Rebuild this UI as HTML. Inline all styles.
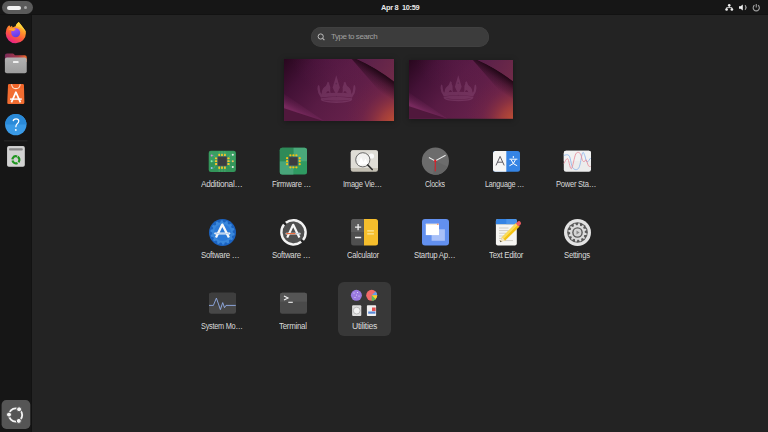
<!DOCTYPE html>
<html><head><meta charset="utf-8">
<style>
*{margin:0;padding:0;box-sizing:border-box}
html,body{width:768px;height:432px;overflow:hidden;background:#232323;font-family:"Liberation Sans",sans-serif}
.abs{position:absolute}
#top{left:0;top:0;width:768px;height:15px;background:#161616;border-bottom:1px solid #121212}
#dock{left:0;top:15px;width:32px;height:417px;background:#161616;border-right:1px solid #121212}
#pill{left:1.5px;top:1.2px;width:31.5px;height:13px;border-radius:6.5px;background:#5a5a5a}
#pill i{position:absolute;left:5.5px;top:4.4px;width:14px;height:4.3px;border-radius:2.15px;background:#f2f2f2}
#pill b{position:absolute;left:22.3px;top:4.9px;width:3px;height:3px;border-radius:50%;background:#a8a8a8}
#clock{left:381px;top:2.9px;font-size:7.4px;font-weight:bold;color:#e8e8e8;white-space:pre;letter-spacing:-0.3px}
#search{left:310.7px;top:26.7px;width:178.4px;height:20.4px;border-radius:10.2px;background:#3c3c3c;box-shadow:inset 0 0 0 0.6px #444}
#search span{position:absolute;left:20.2px;top:5.6px;font-size:8px;color:#a0a0a0;letter-spacing:-0.44px}
.thumb{box-shadow:0 1px 6px rgba(0,0,0,.35)}
.lbl{position:absolute;font-size:8.5px;line-height:10px;color:#dadada;white-space:nowrap;letter-spacing:-0.3px;transform-origin:0 0}
.ic{position:absolute;width:28px;height:28px}
</style></head><body>
<div id="top" class="abs"></div>
<div id="dock" class="abs"></div>
<div id="pill" class="abs"><i></i><b></b></div>
<div id="clock" class="abs">Apr 8  10:59</div>

<!-- top right icons -->
<svg class="abs" style="left:720px;top:0" width="48" height="15" viewBox="0 0 48 15">
 <g fill="#f0f0f0" stroke="#f0f0f0">
  <circle cx="9.25" cy="5.2" r="1.3" stroke="none"/>
  <circle cx="6.6" cy="9.5" r="1.35" stroke="none"/>
  <circle cx="11.9" cy="9.5" r="1.35" stroke="none"/>
  <path d="M9.25 5.5V7.6M6.6 9.3V7.6H11.9V9.3" fill="none" stroke-width="0.8"/>
 </g>
 <path d="M19 6.2H20.6L22.8 4.6V10.4L20.6 8.8H19Z" fill="#f0f0f0"/>
 <path d="M25.3 5.2Q27.3 7.5 25.3 9.8Q26 7.5 25.3 5.2Z" fill="#9a9a9a" stroke="#9a9a9a" stroke-width=".9" stroke-linejoin="round"/>
 <path d="M34.47 5.26A3.1 3.1 0 1 0 38.03 5.26" fill="none" stroke="#a6a6a6" stroke-width="1.05"/>
 <path d="M36.25 4.1V7.4" stroke="#a6a6a6" stroke-width="1.05"/>
</svg>

<!-- search -->
<div id="search" class="abs">
 <svg class="abs" style="left:6px;top:6.8px" width="9" height="9" viewBox="0 0 9 9"><circle cx="3.7" cy="3.5" r="2.6" fill="none" stroke="#bdbdbd" stroke-width="1"/><path d="M5.6 5.4L7.4 7.2" stroke="#bdbdbd" stroke-width="1.1"/></svg>
 <span>Type to search</span>
</div>

<!-- wallpaper def -->
<svg width="0" height="0" style="position:absolute">
 <defs>
  <linearGradient id="wg" gradientUnits="userSpaceOnUse" x1="0" y1="0" x2="110" y2="90">
   <stop offset="0" stop-color="#28071e"/>
   <stop offset="0.25" stop-color="#431136"/>
   <stop offset="0.55" stop-color="#581b44"/>
   <stop offset="1" stop-color="#68224c"/>
  </linearGradient>
  <radialGradient id="wr" cx="168" cy="98" r="82" gradientUnits="userSpaceOnUse">
   <stop offset="0" stop-color="#d05a2c"/>
   <stop offset="0.35" stop-color="#a8403a" stop-opacity="0.85"/>
   <stop offset="0.7" stop-color="#7a2842" stop-opacity="0.35"/>
   <stop offset="1" stop-color="#6a2040" stop-opacity="0"/>
  </radialGradient>
  <radialGradient id="wtop" cx="70" cy="-10" r="60" gradientUnits="userSpaceOnUse">
   <stop offset="0" stop-color="#6a2254" stop-opacity="0.3"/>
   <stop offset="1" stop-color="#6a2254" stop-opacity="0"/>
  </radialGradient>
  <linearGradient id="wsh" gradientUnits="userSpaceOnUse" x1="136" y1="15" x2="122" y2="36">
   <stop offset="0" stop-color="#14030c" stop-opacity="0.9"/>
   <stop offset="0.5" stop-color="#14030c" stop-opacity="0.35"/>
   <stop offset="1" stop-color="#14030c" stop-opacity="0"/>
  </linearGradient>
  <linearGradient id="wfold" gradientUnits="userSpaceOnUse" x1="110" y1="0" x2="160" y2="32">
   <stop offset="0" stop-color="#58204a"/>
   <stop offset="1" stop-color="#702a48"/>
  </linearGradient>
  <linearGradient id="wwedge" gradientUnits="userSpaceOnUse" x1="14" y1="54" x2="6" y2="70">
   <stop offset="0" stop-color="#5c1c48" stop-opacity="0"/>
   <stop offset="1" stop-color="#76295c"/>
  </linearGradient>
 </defs>
</svg>
<svg class="abs thumb" style="left:283.6px;top:58.5px" width="110.5" height="62.5" viewBox="0 0 160 90" preserveAspectRatio="none"><g>
   <rect width="160" height="90" fill="url(#wg)"/>
   <rect width="160" height="90" fill="url(#wtop)"/>
   <rect width="160" height="90" fill="url(#wr)"/>
   <path d="M105 0Q133 12 160 32V72Q128 34 98 0Z" fill="url(#wsh)"/>
   <path d="M106 0Q134 13 160 33V0Z" fill="url(#wfold)"/>
   <path d="M0 50L59 90H0Z" fill="url(#wwedge)"/>
   <path d="M0 71L59 90H0Z" fill="#4c1639" opacity=".9"/>
   <g fill="#a0608e" opacity="0.3">
    <path d="M75.7 23.5L80.8 41Q79 46.5 75.7 51.2Q72.4 46.5 70.5 41Z"/>
    <path d="M49.4 37.5Q46.3 47 53.4 55.5L56 54.5Q51.2 47 51.3 38.6Z"/>
    <path d="M102.6 37.5Q105.7 47 98.6 55.5L96 54.5Q100.8 47 100.7 38.6Z"/>
    <path d="M54.8 51.5Q54 44 58.5 40.5Q61.5 38.5 62.3 35.2L63.2 32.6L65.4 33.8L65.6 36.5Q67.6 40 67 44Q66.8 46.5 67.5 49H66Q65.5 47 64 46Q61.5 46.5 61 49.5Z"/>
    <path d="M97.2 51.5Q98 44 93.5 40.5Q90.5 38.5 89.7 35.2L88.8 32.6L86.6 33.8L86.4 36.5Q84.4 40 85 44Q85.2 46.5 84.5 49H86Q86.5 47 88 46Q90.5 46.5 91 49.5Z"/>
    <path d="M54 49.5Q76 47.5 98 49.5L98.6 55.5Q76 52.5 53.4 55.5Z"/>
    <path d="M53.4 56.5Q76 52 98.6 56.5Q101 62.8 76 63.2Q51 62.8 53.4 56.5ZM56 58.6Q76 61.5 96 58.6Q94 60.5 76 61Q58 60.5 56 58.6Z" fill-rule="evenodd"/>
   </g>
   <g fill="#3a0e30" opacity=".3">
    <circle cx="75.7" cy="35.5" r="1.2"/>
    <circle cx="75.7" cy="53.8" r=".7"/>
   </g>
  </g>
</svg>
<svg class="abs thumb" style="left:409px;top:60.2px" width="104.2" height="58.7" viewBox="0 0 160 90" preserveAspectRatio="none"><g>
   <rect width="160" height="90" fill="url(#wg)"/>
   <rect width="160" height="90" fill="url(#wtop)"/>
   <rect width="160" height="90" fill="url(#wr)"/>
   <path d="M105 0Q133 12 160 32V72Q128 34 98 0Z" fill="url(#wsh)"/>
   <path d="M106 0Q134 13 160 33V0Z" fill="url(#wfold)"/>
   <path d="M0 50L59 90H0Z" fill="url(#wwedge)"/>
   <path d="M0 71L59 90H0Z" fill="#4c1639" opacity=".9"/>
   <g fill="#a0608e" opacity="0.3">
    <path d="M75.7 23.5L80.8 41Q79 46.5 75.7 51.2Q72.4 46.5 70.5 41Z"/>
    <path d="M49.4 37.5Q46.3 47 53.4 55.5L56 54.5Q51.2 47 51.3 38.6Z"/>
    <path d="M102.6 37.5Q105.7 47 98.6 55.5L96 54.5Q100.8 47 100.7 38.6Z"/>
    <path d="M54.8 51.5Q54 44 58.5 40.5Q61.5 38.5 62.3 35.2L63.2 32.6L65.4 33.8L65.6 36.5Q67.6 40 67 44Q66.8 46.5 67.5 49H66Q65.5 47 64 46Q61.5 46.5 61 49.5Z"/>
    <path d="M97.2 51.5Q98 44 93.5 40.5Q90.5 38.5 89.7 35.2L88.8 32.6L86.6 33.8L86.4 36.5Q84.4 40 85 44Q85.2 46.5 84.5 49H86Q86.5 47 88 46Q90.5 46.5 91 49.5Z"/>
    <path d="M54 49.5Q76 47.5 98 49.5L98.6 55.5Q76 52.5 53.4 55.5Z"/>
    <path d="M53.4 56.5Q76 52 98.6 56.5Q101 62.8 76 63.2Q51 62.8 53.4 56.5ZM56 58.6Q76 61.5 96 58.6Q94 60.5 76 61Q58 60.5 56 58.6Z" fill-rule="evenodd"/>
   </g>
   <g fill="#3a0e30" opacity=".3">
    <circle cx="75.7" cy="35.5" r="1.2"/>
    <circle cx="75.7" cy="53.8" r=".7"/>
   </g>
  </g>
</svg>

<!-- dock icons -->
<svg class="abs" style="left:0;top:15px" width="31" height="417" viewBox="0 15 31 417">
 <defs>
  <linearGradient id="ffg" x1="0.85" y1="0.05" x2="0.35" y2="1">
   <stop offset="0" stop-color="#ffe24a"/>
   <stop offset="0.35" stop-color="#ff9a2a"/>
   <stop offset="0.65" stop-color="#ff5a3a"/>
   <stop offset="1" stop-color="#e8208a"/>
  </linearGradient>
  <linearGradient id="fdb" x1="0" y1="0" x2="1" y2="0">
   <stop offset="0" stop-color="#7a2a58"/>
   <stop offset="0.6" stop-color="#a83a48"/>
   <stop offset="1" stop-color="#f06a28"/>
  </linearGradient>
  <linearGradient id="fdg" x1="0" y1="0" x2="0" y2="1">
   <stop offset="0" stop-color="#b2b2b2"/>
   <stop offset="1" stop-color="#9c9c9c"/>
  </linearGradient>
  <linearGradient id="ffp" x1="0.3" y1="0" x2="0.6" y2="1">
   <stop offset="0" stop-color="#a050ff"/>
   <stop offset="1" stop-color="#5a3ee0"/>
  </linearGradient>
 </defs>
 <!-- firefox -->
 <path d="M18.7 21.9Q20.8 24.3 23.4 28.1Q26 31 25.9 33.2A10.1 10.1 0 0 1 5.7 33.3Q5.7 29 7.8 26.6L9.3 25.2L10.4 27.1L11.9 25.7L12.7 27.6Q14 26.6 15.6 26.3Q16.2 23.6 18.7 21.9Z" fill="url(#ffg)"/>
 <path d="M18.7 21.9Q20.8 24.3 23.4 28.1Q26 31 25.9 33.2Q24.5 29 20.5 27.5Q18 26.2 15.6 26.3Q16.2 23.6 18.7 21.9Z" fill="#ffd23a"/>
 <circle cx="15.7" cy="32.8" r="4.5" fill="url(#ffp)"/>
 <path d="M8.2 29.4Q10.5 27.8 13.2 28.3Q14.8 28.6 15.9 30Q14 30.4 13.2 31.2Q11 30.2 8.2 29.4Z" fill="#ffa02e"/>
 <!-- files -->
 <path d="M4.9 55.6Q4.9 53.5 7 53.5H12.6Q13.6 53.5 14.3 54.4L14.9 55.2H24.7Q26.75 55.2 26.75 57.2V62H4.9Z" fill="url(#fdb)"/>
 <rect x="4.9" y="57.5" width="21.85" height="15.8" rx="2" fill="url(#fdg)"/>
 <rect x="13" y="61.1" width="5.6" height="2" rx=".6" fill="#f0f0f0"/>
 <!-- app center -->
 <path d="M9.2 83.9H22.8Q23.9 83.9 23.95 85L24.4 102.6Q24.4 103.9 23.1 103.9H8.7Q7.4 103.9 7.4 102.6L8 85Q8.1 83.9 9.2 83.9Z" fill="#f0662a"/>
 <path d="M8 88Q16 89.5 24 88V103.9H7.4Z" fill="#f47438" opacity=".5"/>
 <path d="M11.6 84.2Q12 88.6 15.9 88.6Q19.8 88.6 20.2 84.2" fill="none" stroke="#fde0cc" stroke-width="1.1"/>
 <path d="M11.4 102.4L15.9 92.2L20.4 102.4" fill="none" stroke="#fff" stroke-width="1.7" stroke-linejoin="round"/>
 <path d="M10 99.1H21.8" stroke="#fff" stroke-width="1.4"/>
 <!-- help -->
 <circle cx="15.8" cy="124.6" r="10.7" fill="#3a9ae6"/>
 <path d="M5.1 124.6A10.7 10.7 0 0 1 26.5 124.6Z" fill="#2a8ad8"/>
 <path d="M13.2 121.1Q13.4 118.8 16.1 118.8Q18.8 118.8 18.8 121.1Q18.8 122.7 17 124.1Q15.9 125 15.8 127.2" fill="none" stroke="#fff" stroke-width="1.25"/>
 <circle cx="15.8" cy="129.9" r="0.95" fill="#fff"/>
 <!-- separator -->
 <rect x="4.1" y="140.4" width="23.3" height="0.9" fill="#2e2e2e"/>
 <!-- trash -->
 <rect x="7.05" y="146.1" width="17.75" height="20.7" rx="1.8" fill="#c4c4c4"/>
 <rect x="7.5" y="146.5" width="16.85" height="19.8" rx="1.5" fill="#d2d2d2"/>
 <rect x="9" y="148.2" width="13.8" height="2.2" rx="1" fill="#888"/>
 <circle cx="15.9" cy="159.8" r="3.5" fill="none" stroke="#1f951f" stroke-width="2.2" stroke-dasharray="6.2 1.13" transform="rotate(-60 15.9 159.8)"/>
 <!-- show apps -->
 <rect x="1.6" y="400" width="28.7" height="29" rx="4.7" fill="#555"/>
 <circle cx="15.6" cy="415" r="6.6" fill="none" stroke="#f2f2f2" stroke-width="1.9"/>
 <circle cx="9" cy="414.6" r="2.5" fill="#f4f4f4" stroke="#555" stroke-width="1"/>
 <circle cx="19.1" cy="409.3" r="2.5" fill="#f4f4f4" stroke="#555" stroke-width="1"/>
 <circle cx="18.8" cy="420.9" r="2.5" fill="#f4f4f4" stroke="#555" stroke-width="1"/>
</svg>

<!-- app grid: labels -->
<div class="abs" style="left:337.6px;top:282.1px;width:53.7px;height:53.7px;border-radius:6px;background:#383838"></div>
<div class="lbl" style="left:200.9px;top:178.5px;transform:scaleX(0.974)">Additional…</div>
<div class="lbl" style="left:271.9px;top:178.5px;transform:scaleX(0.897)">Firmware …</div>
<div class="lbl" style="left:343.2px;top:178.5px;transform:scaleX(0.891)">Image Vie…</div>
<div class="lbl" style="left:425.1px;top:178.5px;transform:scaleX(0.833)">Clocks</div>
<div class="lbl" style="left:485.0px;top:178.5px;transform:scaleX(0.853)">Language …</div>
<div class="lbl" style="left:556.1px;top:178.5px;transform:scaleX(0.895)">Power Sta…</div>
<div class="lbl" style="left:200.7px;top:249.5px;transform:scaleX(0.927)">Software …</div>
<div class="lbl" style="left:271.8px;top:249.5px;transform:scaleX(0.927)">Software …</div>
<div class="lbl" style="left:347.4px;top:249.5px;transform:scaleX(0.903)">Calculator</div>
<div class="lbl" style="left:413.8px;top:249.5px;transform:scaleX(0.920)">Startup Ap…</div>
<div class="lbl" style="left:488.9px;top:249.5px;transform:scaleX(0.924)">Text Editor</div>
<div class="lbl" style="left:564.1px;top:249.5px;transform:scaleX(0.910)">Settings</div>
<div class="lbl" style="left:200.7px;top:320.5px;transform:scaleX(0.865)">System Mo…</div>
<div class="lbl" style="left:279.1px;top:320.5px;transform:scaleX(0.930)">Terminal</div>
<div class="lbl" style="left:351.6px;top:320.5px;transform:scaleX(1.016)">Utilities</div>

<!-- app grid icons -->
<svg class="abs" style="left:0;top:0" width="768" height="432">
 <!-- Additional drivers -->
 <rect x="208.7" y="150.8" width="27.2" height="21.2" rx="2.2" fill="#33955a"/>
 <rect x="209.2" y="151.3" width="26.2" height="10" rx="1.8" fill="#3a9e62"/>
 <g stroke="#6cc090" stroke-width=".45" fill="none" opacity=".8">
  <path d="M219.2 151V172M222 151V172M224.9 151V172"/>
  <path d="M212.3 155.5H214L216 158.4M212.2 161.2H216M212.3 168.1H214L216 164M232.2 154.8H230.5L228.3 158.4M232.2 161.2H228.3M232.2 167H230.5L228.3 164"/>
 </g>
 <g fill="#f6c42a">
  <rect x="218.3" y="153.7" width="1.8" height="2.6" rx=".7"/><rect x="221.1" y="153.7" width="1.8" height="2.6" rx=".7"/><rect x="224" y="153.7" width="1.8" height="2.6" rx=".7"/>
  <rect x="218.3" y="166.3" width="1.8" height="2.6" rx=".7"/><rect x="221.1" y="166.3" width="1.8" height="2.6" rx=".7"/><rect x="224" y="166.3" width="1.8" height="2.6" rx=".7"/>
  <rect x="214.9" y="157.5" width="2.6" height="1.8" rx=".7"/><rect x="214.9" y="160.3" width="2.6" height="1.8" rx=".7"/><rect x="214.9" y="163.1" width="2.6" height="1.8" rx=".7"/>
  <rect x="227.1" y="157.5" width="2.6" height="1.8" rx=".7"/><rect x="227.1" y="160.3" width="2.6" height="1.8" rx=".7"/><rect x="227.1" y="163.1" width="2.6" height="1.8" rx=".7"/>
 </g>
 <rect x="217.6" y="156.6" width="9.4" height="9.4" rx=".4" fill="#3c3c40" stroke="#5a6878" stroke-width=".5"/>
 <circle cx="211.7" cy="155.5" r="1" fill="#dc8add"/><circle cx="211.6" cy="161.2" r="1" fill="#8ff0a4"/><circle cx="211.7" cy="168.1" r="1" fill="#99c1f1"/>
 <circle cx="232.8" cy="154.8" r="1" fill="#eee"/><circle cx="232.8" cy="161.2" r="1" fill="#f9c060"/><circle cx="232.8" cy="167" r="1" fill="#eee"/>

 <!-- Firmware -->
 <rect x="279.8" y="147.8" width="27.2" height="26.8" rx="2.5" fill="#2f9a62"/>
 <path d="M293.4 147.8H304.5Q307 147.8 307 150.3V161.2H293.4Z" fill="#4aa87a"/>
 <path d="M279.8 161.2H293.4V174.6H282.3Q279.8 174.6 279.8 172.1Z" fill="#48a57a"/>
 <path d="M282.3 147.8H293.4V161.2H279.8V150.3Q279.8 147.8 282.3 147.8Z" fill="#2e8a58"/>
 <g fill="#f5c211">
  <circle cx="290.4" cy="155.3" r="1.15"/><circle cx="293.4" cy="155.3" r="1.15"/><circle cx="296.4" cy="155.3" r="1.15"/>
  <circle cx="290.4" cy="167.3" r="1.15"/><circle cx="293.4" cy="167.3" r="1.15"/><circle cx="296.4" cy="167.3" r="1.15"/>
  <circle cx="287.1" cy="158.2" r="1.15"/><circle cx="287.1" cy="161.2" r="1.15"/><circle cx="287.1" cy="164.2" r="1.15"/>
  <circle cx="299.7" cy="158.2" r="1.15"/><circle cx="299.7" cy="161.2" r="1.15"/><circle cx="299.7" cy="164.2" r="1.15"/>
 </g>
 <rect x="288.9" y="156.9" width="9" height="8.8" rx=".4" fill="#3c3c40" stroke="#5a6878" stroke-width=".5"/>

 <!-- Image viewer -->
 <rect x="350.8" y="150.2" width="27.2" height="21.5" rx="2.2" fill="#c4c0b4"/>
 <path d="M353 150.2H375.8Q378 150.2 378 152.4V168H350.8V152.4Q350.8 150.2 353 150.2Z" fill="#dfddd6"/>
 <circle cx="371.5" cy="156" r="2.6" fill="#fafafa"/>
 <circle cx="362.8" cy="159.8" r="7.1" fill="#f2f2f0" stroke="#5a5a5a" stroke-width=".9"/>
 <path d="M358 165L361 157L363.5 162L365.5 158.5L368 164Z" fill="#fff"/>
 <path d="M367.8 165L372.2 169.5" stroke="#2e2e2e" stroke-width="1.7" stroke-linecap="round"/>

 <!-- Clocks -->
 <circle cx="435.4" cy="161.1" r="13.6" fill="#6c6c6c"/>
 <path d="M435.4 161.1L447.73 166.85A13.6 13.6 0 0 1 433.04 174.49Z" fill="#656565"/>
 <path d="M428.9 157.5L435.2 160.9L445.6 155.3" fill="none" stroke="#ececec" stroke-width="1.1"/>
 <path d="M435.25 160.8V171.3" stroke="#e01b24" stroke-width="1"/>
 <circle cx="435.25" cy="160.9" r="1.2" fill="#e01b24"/>

 <!-- Language -->
 <rect x="493" y="150.9" width="27" height="20.8" rx="2.5" fill="#3584e4"/>
 <path d="M495.5 150.9H506.3V171.7H495.5Q493 171.7 493 169.2V153.4Q493 150.9 495.5 150.9Z" fill="#f6f5f4"/>
 <path d="M496 165.4L500.1 156.4L504.2 165.4M497.4 162.2H502.8" fill="none" stroke="#5e5c64" stroke-width="1"/>
 <g fill="none" stroke="#fff" stroke-width="1">
  <path d="M513.3 156V158M509.4 159.2H517.4M511 159.5Q512.6 164.6 517.2 165.8M515.6 159.5Q514 164.6 509.4 165.8"/>
 </g>

 <!-- Power stats -->
 <rect x="563.8" y="150.8" width="27.2" height="20.9" rx="2.2" fill="#ececec"/>
 <path d="M566 150.8H588.8Q591 150.8 591 153V161H563.8V153Q563.8 150.8 566 150.8Z" fill="#f2f2f2"/>
 <path d="M563.96 155.37C564.83 155.43 567.67 153.64 569.15 155.74C570.63 157.84 571.25 165.93 572.85 167.96C574.46 170.00 577.17 170.43 578.78 167.96C580.38 165.49 581.49 155.25 582.48 153.15C583.47 151.05 583.96 153.89 584.70 155.37C585.44 156.85 585.94 161.60 586.93 162.04C587.91 162.47 590.01 158.64 590.63 157.96" fill="none" stroke="#8cb6ec" stroke-width=".85"/>
 <path d="M563.96 163.52C564.58 162.72 566.43 157.84 567.67 158.70C568.90 159.57 570.01 169.51 571.37 168.70C572.73 167.90 574.33 156.42 575.81 153.89C577.30 151.36 579.15 152.41 580.26 153.52C581.37 154.63 581.74 159.26 582.48 160.56C583.22 161.85 584.09 161.42 584.70 161.30C585.32 161.17 585.57 159.07 586.19 159.81C586.80 160.56 587.67 164.63 588.41 165.74C589.15 166.85 590.26 166.36 590.63 166.48" fill="none" stroke="#e88c9a" stroke-width=".85"/>

 <!-- Software & updates -->
 <circle cx="222.5" cy="232.5" r="13.5" fill="#1b62c0"/>
 <path d="M232.80 232.50L234.65 233.59L234.39 235.21L232.30 235.68L231.78 236.97L232.97 238.76L232.04 240.11L229.94 239.62L228.92 240.55L229.22 242.68L227.79 243.49L226.12 242.14L224.79 242.54L224.14 244.59L222.50 244.70L221.58 242.76L220.21 242.54L218.73 244.10L217.21 243.49L217.22 241.34L216.08 240.55L214.07 241.32L212.96 240.11L213.90 238.17L213.22 236.97L211.08 236.79L210.61 235.21L212.29 233.88L212.20 232.50L210.35 231.41L210.61 229.79L212.70 229.32L213.22 228.03L212.03 226.24L212.96 224.89L215.06 225.38L216.08 224.45L215.78 222.32L217.21 221.51L218.88 222.86L220.21 222.46L220.86 220.41L222.50 220.30L223.42 222.24L224.79 222.46L226.27 220.90L227.79 221.51L227.78 223.66L228.92 224.45L230.93 223.68L232.04 224.89L231.10 226.83L231.78 228.03L233.92 228.21L234.39 229.79L232.71 231.12Z" fill="#3a88dc"/>
 <circle cx="222.5" cy="232.5" r="8.6" fill="#2c7ad8"/>
 <path d="M216 237.6L222.3 224.6L228.9 237.6" fill="none" stroke="#f8f8f8" stroke-width="2.3" stroke-linejoin="round"/>
 <rect x="214.2" y="232.4" width="16.2" height="2" rx=".8" fill="#f4f4f4"/>
 <rect x="215.5" y="233" width="13.6" height=".7" fill="#a8c8f0"/>

 <!-- Software updater -->
 <circle cx="293.5" cy="232.3" r="10.8" fill="#505050"/>
 <path d="M285.8 222.8A12.25 12.25 0 0 1 303 240" fill="none" stroke="#f2f2f2" stroke-width="2.5"/>
 <path d="M301.2 241.8A12.25 12.25 0 0 1 284 224.6" fill="none" stroke="#f2f2f2" stroke-width="2.5"/>
 <path d="M287.2 237.6L293.2 224.8L299.4 237.6" fill="none" stroke="#f8f8f8" stroke-width="2.2" stroke-linejoin="round"/>
 <rect x="285.6" y="232.8" width="15" height="1.7" rx=".6" fill="#f4f4f4"/>
 <path d="M286.2 233.65H295.6" stroke="#e95420" stroke-width="1"/>
 <path d="M295.6 233.65H300" stroke="#b8c8d8" stroke-width="1"/>

 <!-- Calculator -->
 <path d="M363.9 219H375.5Q378 219 378 221.5V243.1Q378 245.6 375.5 245.6H363.9Z" fill="#f6be2c"/>
 <path d="M353.6 219H363.9V245.6H353.6Q351.1 245.6 351.1 243.1V221.5Q351.1 219 353.6 219Z" fill="#4f4f4f"/>
 <path d="M353.6 219H363.9V231.9H351.1V221.5Q351.1 219 353.6 219Z" fill="#5c5c5c"/>
 <path d="M355 227.2H361.2M358.1 224.1V230.3M355 237.5H361.2" stroke="#f0f0f0" stroke-width="1.3"/>
 <path d="M367.2 230.9H373.9M367.2 233.8H373.9" stroke="#fde89a" stroke-width="1.25"/>

 <!-- Startup apps -->
 <rect x="422" y="219" width="27" height="26.6" rx="3" fill="#6290ef"/>
 <rect x="431.6" y="229.3" width="13.3" height="11.5" fill="#a8c0f8"/>
 <rect x="425.8" y="223.8" width="13.2" height="11.3" fill="#fff"/>
 <rect x="425.8" y="223.8" width="13.2" height="1.2" fill="#f6ead8"/>
 <circle cx="437.8" cy="224.3" r=".7" fill="#ff7a50"/>

 <!-- Text editor -->
 <rect x="495.9" y="219" width="20.9" height="26.6" rx="2" fill="#f6f5f2"/>
 <path d="M497.9 219H514.8Q516.8 219 516.8 221V224.4H495.9V221Q495.9 219 497.9 219Z" fill="#3584e4"/>
 <path d="M506.3 219H514.8Q516.8 219 516.8 221V224.4H506.3Z" fill="#4a94ea"/>
 <rect x="495.9" y="224.4" width="20.9" height=".6" fill="#e8dcc0"/>
 <g stroke="#cfcdc6" stroke-width="1"><path d="M499 228H508.5M499 230.6H508.5M499 233.2H506M499 236H504M499 238.4H502.5M499 240.6H513"/></g>
 <path d="M500.2 241.8L502 237.2L516.2 223L519.6 226.4L505.2 240.6Z" fill="#f5c211"/>
 <path d="M502 237.2L516.2 223L517.9 224.7L503.6 238.9Z" fill="#f9dc5c"/>
 <path d="M500.2 241.8L502 237.2L505.2 240.6Z" fill="#f0e2c0"/>
 <path d="M500 242.2L500.6 240.6L501.7 241.6Z" fill="#333"/>
 <path d="M515.8 223.4L517.8 221.4Q519.4 220.6 520.6 221.9Q521.6 223.3 520.4 224.7L518.5 226.6Z" fill="#ed5a60"/>

 <!-- Settings -->
 <circle cx="577.5" cy="232.5" r="13.5" fill="#e2e2e2"/>
 <circle cx="577.5" cy="232.5" r="10.3" fill="#585858"/>
 <path d="M584.80 232.50L586.76 233.38L586.48 234.91L584.34 235.04L583.82 236.15L585.08 237.89L584.08 239.08L582.15 238.12L581.15 238.82L581.37 240.96L579.91 241.48L578.72 239.70L577.50 239.80L576.62 241.76L575.09 241.48L574.96 239.34L573.85 238.82L572.11 240.08L570.92 239.08L571.88 237.15L571.18 236.15L569.04 236.37L568.52 234.91L570.30 233.72L570.20 232.50L568.24 231.62L568.52 230.09L570.66 229.96L571.18 228.85L569.92 227.11L570.92 225.92L572.85 226.88L573.85 226.18L573.63 224.04L575.09 223.52L576.28 225.30L577.50 225.20L578.38 223.24L579.91 223.52L580.04 225.66L581.15 226.18L582.89 224.92L584.08 225.92L583.12 227.85L583.82 228.85L585.96 228.63L586.48 230.09L584.70 231.28Z" fill="#dadada"/>
 <circle cx="577.5" cy="232.5" r="5.3" fill="#5a5a5a"/>
 <circle cx="577.5" cy="232.5" r="3.9" fill="#d4d4d4"/>
 <path d="M576.5 230.6L579.6 232.5L576.5 234.4Z" fill="#8a8a8a"/>

 <!-- System monitor -->
 <rect x="209" y="292.8" width="27" height="20.9" rx="2.2" fill="#474747"/>
 <path d="M211.2 292.8H233.8Q236 292.8 236 295V305.4H209V295Q209 292.8 211.2 292.8Z" fill="#3e3e3e"/>
 <path d="M209 305.4H213.4L216.4 298.1L220.4 309.6L222.7 302.6L224.5 307.7L226 305.4H235.8" fill="none" stroke="#93aee8" stroke-width=".9" stroke-linejoin="round"/>

 <!-- Terminal -->
 <rect x="280" y="292.8" width="27" height="20.9" rx="2.2" fill="#4a4a4a"/>
 <path d="M282.2 292.8H304.8Q307 292.8 307 295V301.7H280V295Q280 292.8 282.2 292.8Z" fill="#555"/>
 <path d="M284 296L288 298L284 300" fill="none" stroke="#f4f4f4" stroke-width="1.1"/>
 <path d="M288.3 302.3H292.8" stroke="#f4f4f4" stroke-width="1.1"/>

 <!-- Utilities mini icons -->
 <circle cx="356.4" cy="295.3" r="5.5" fill="#9a7ae0"/>
 <g fill="#e6dcff"><circle cx="354" cy="293" r=".6"/><circle cx="357.5" cy="292.5" r=".6"/><circle cx="359" cy="296" r=".6"/><circle cx="355" cy="297.5" r=".6"/><circle cx="356.5" cy="295" r=".5"/></g>
 <circle cx="371.7" cy="295.3" r="5.5" fill="#f26a6a"/>
 <path d="M371.7 295.3L375.6 291.4A5.5 5.5 0 0 1 377.2 295.3Z" fill="#62a0ea"/>
 <path d="M371.7 295.3H377.2A5.5 5.5 0 0 1 375.6 299.2Z" fill="#f6d32d"/>
 <path d="M371.7 295.3L375.6 299.2A5.5 5.5 0 0 1 371.7 300.8Z" fill="#57c35a"/>
 <rect x="352.1" y="305.2" width="9.2" height="10.8" rx="1" fill="#dedede"/>
 <circle cx="356.7" cy="310.6" r="3.4" fill="#f2f2f2" stroke="#8a8a8a" stroke-width=".5"/>
 <rect x="366.9" y="305.2" width="9.2" height="10.8" rx=".8" fill="#f0f0f0"/>
 <rect x="372" y="307.5" width="3.6" height="3.6" fill="#e45050"/>
 <rect x="368.2" y="311.5" width="7.2" height="2.2" fill="#5a8ad8"/>
</svg>
</body></html>
